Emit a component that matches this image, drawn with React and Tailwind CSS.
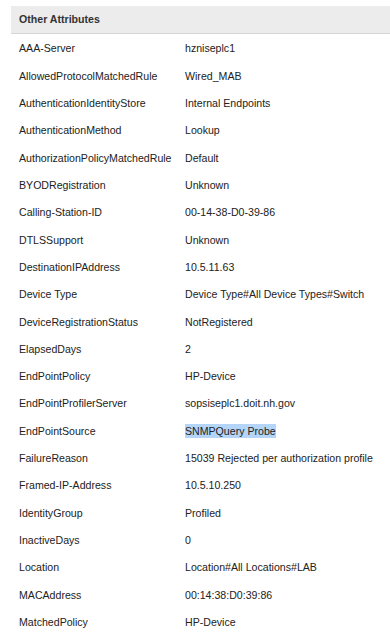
export default function App() {
  const rows = [
    ["AAA-Server", "hzniseplc1"],
    ["AllowedProtocolMatchedRule", "Wired_MAB"],
    ["AuthenticationIdentityStore", "Internal Endpoints"],
    ["AuthenticationMethod", "Lookup"],
    ["AuthorizationPolicyMatchedRule", "Default"],
    ["BYODRegistration", "Unknown"],
    ["Calling-Station-ID", "00-14-38-D0-39-86"],
    ["DTLSSupport", "Unknown"],
    ["DestinationIPAddress", "10.5.11.63"],
    ["Device Type", "Device Type#All Device Types#Switch"],
    ["DeviceRegistrationStatus", "NotRegistered"],
    ["ElapsedDays", "2"],
    ["EndPointPolicy", "HP-Device"],
    ["EndPointProfilerServer", "sopsiseplc1.doit.nh.gov"],
    ["EndPointSource", "SNMPQuery Probe", true],
    ["FailureReason", "15039 Rejected per authorization profile"],
    ["Framed-IP-Address", "10.5.10.250"],
    ["IdentityGroup", "Profiled"],
    ["InactiveDays", "0"],
    ["Location", "Location#All Locations#LAB"],
    ["MACAddress", "00:14:38:D0:39:86"],
    ["MatchedPolicy", "HP-Device"],
  ];
  return (
    <div className="w-[390px] h-[637px] overflow-hidden bg-white pt-[6px] pl-[11px] text-[10.6px] text-[#222]" style={{ fontFamily: '"Liberation Sans", Arial, sans-serif' }}>
      <div className="h-[28px] bg-[#ececec] border-b border-[#d6d6d6] flex items-center pl-[8px] font-bold text-[#333]">
        Other Attributes
      </div>
      <div className="flex flex-col mt-[1.5px]">
        {rows.map(([k, v, hl]) => (
          <div key={k} className="h-[27.33px] flex items-center pl-[8px]">
            <div className="w-[166px] shrink-0 whitespace-nowrap">{k}</div>
            <div className="whitespace-nowrap">
              {hl ? <span className="bg-[#b4d5f7] py-[1px]">{v}</span> : v}
            </div>
          </div>
        ))}
      </div>
    </div>
  );
}
